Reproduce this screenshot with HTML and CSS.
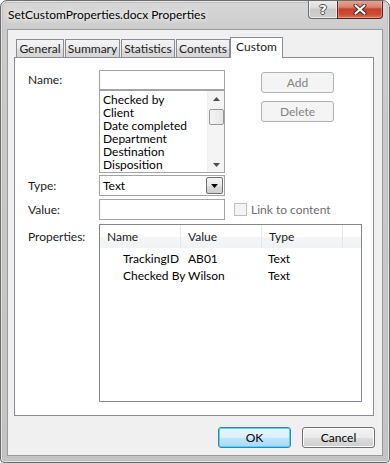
FILE: index.html
```html
<!DOCTYPE html>
<html>
<head>
<meta charset="utf-8">
<link rel="stylesheet" href="styles.css">
</head>
<body>
<div class="window">
  <div class="titlebar">
    <span class="title">SetCustomProperties.docx Properties</span>
    <div class="caption-btns">
      <div class="cbtn help"><span class="qmark">?</span></div>
      <div class="cbtn close">
        <svg width="14" height="11" viewBox="0 0 14 11">
          <path d="M2.5 1.5 L11.5 9.5 M11.5 1.5 L2.5 9.5" stroke="#3a2a28" stroke-width="4" stroke-linecap="round"/>
          <path d="M2.5 1.5 L11.5 9.5 M11.5 1.5 L2.5 9.5" stroke="#ffffff" stroke-width="2.2" stroke-linecap="round"/>
        </svg>
      </div>
    </div>
  </div>
  <div class="client">
    <div class="tabs">
      <div class="tab t-general">General</div>
      <div class="tab t-summary">Summary</div>
      <div class="tab t-stats">Statistics</div>
      <div class="tab t-contents">Contents</div>
      <div class="tab selected t-custom">Custom</div>
    </div>
    <div class="panel">
      <div class="row row-name">
        <div class="label">Name:</div>
        <div class="simple-combo">
          <div class="edit"></div>
          <div class="listbox">
            <div class="items">
              <div class="item">Checked by</div>
              <div class="item">Client</div>
              <div class="item">Date completed</div>
              <div class="item">Department</div>
              <div class="item">Destination</div>
              <div class="item">Disposition</div>
            </div>
            <div class="vscroll">
              <svg class="arrow" width="7" height="4" viewBox="0 0 7 4"><path d="M0 4 L3.5 0 L7 4 Z" fill="#4d4d4d"/></svg>
              <div class="thumb"></div>
              <div class="track"></div>
              <svg class="arrow" width="7" height="4" viewBox="0 0 7 4"><path d="M0 0 L7 0 L3.5 4 Z" fill="#4d4d4d"/></svg>
            </div>
          </div>
        </div>
        <div class="side-btns">
          <div class="btn disabled">Add</div>
          <div class="btn disabled">Delete</div>
        </div>
      </div>
      <div class="row row-type">
        <div class="label">Type:</div>
        <div class="dropdown">
          <span class="dd-text">Text</span>
          <div class="dd-btn"><svg width="7" height="4" viewBox="0 0 7 4"><path d="M0 0 L7 0 L3.5 4 Z" fill="#000"/></svg></div>
        </div>
      </div>
      <div class="row row-value">
        <div class="label">Value:</div>
        <div class="edit value-edit"></div>
        <div class="checkbox"></div>
        <span class="check-label">Link to content</span>
      </div>
      <div class="row row-props">
        <div class="label">Properties:</div>
        <div class="listview">
          <div class="lv-header">
            <div class="lv-col c-name">Name</div>
            <div class="lv-col c-value">Value</div>
            <div class="lv-col c-type">Type</div>
            <div class="lv-col c-rest"></div>
          </div>
          <div class="lv-body">
            <div class="lv-row">
              <div class="lv-cell c-name">TrackingID</div>
              <div class="lv-cell c-value">AB01</div>
              <div class="lv-cell c-type">Text</div>
            </div>
            <div class="lv-row">
              <div class="lv-cell c-name">Checked By</div>
              <div class="lv-cell c-value">Wilson</div>
              <div class="lv-cell c-type">Text</div>
            </div>
          </div>
        </div>
      </div>
    </div>
    <div class="buttons">
      <div class="btn default">OK</div>
      <div class="btn">Cancel</div>
    </div>
  </div>
</div>
</body>
</html>
```

FILE: styles.css
```css
html, body {
  margin: 0;
  padding: 0;
  background: #ffffff;
}

body {
  font-family: Lato, "Noto Sans", "Liberation Sans", sans-serif;
  font-size: 12px;
  color: #1b1b1b;
}

.window {
  width: 390px;
  height: 463px;
  box-sizing: border-box;
  border: 1px solid #6c6c6c;
  border-radius: 7px 7px 4px 4px;
  background: linear-gradient(to bottom, #d8d8d8 0px, #cbcbcb 30px, #c4c4c4 100%);
  box-shadow: inset 0 0 0 1px #e4e4e4, inset 0 0 0 2px #c0c0c0;
  padding: 0 6px 6px 6px;
  display: flex;
  flex-direction: column;
  overflow: hidden;
}

.titlebar {
  height: 28px;
  display: flex;
  align-items: flex-start;
  flex: none;
}

.title {
  padding: 5px 0 0 1px;
  line-height: 18px;
  font-size: 12px;
  color: #000;
  text-shadow: 0 0 8px #ffffff, 0 0 4px #ffffff;
}

.caption-btns {
  margin-left: auto;
  margin-top: -1px;
  display: flex;
}

.cbtn {
  height: 19px;
  box-sizing: border-box;
  border: 1px solid #6e6e6e;
  border-top: none;
  display: flex;
  align-items: center;
  justify-content: center;
}

.help {
  width: 29px;
  border-right: none;
  border-radius: 0 0 0 4px;
  background: linear-gradient(to bottom, #eeeeee 0%, #dcdcdc 45%, #c8c8c8 50%, #cfcfcf 100%);
  box-shadow: inset 0 0 0 1px rgba(255,255,255,0.6);
}

.qmark {
  font-family: "DejaVu Sans", sans-serif;
  font-weight: bold;
  font-size: 13px;
  line-height: 13px;
  color: #ffffff;
  text-shadow: 1px 0 0 #4a4a4a, -1px 0 0 #4a4a4a, 0 1px 0 #4a4a4a, 0 -1px 0 #4a4a4a;
}

.close {
  width: 46px;
  border-color: #5a2219;
  border-radius: 0 0 4px 0;
  background: linear-gradient(to bottom, #e8a898 0%, #d9806c 40%, #c7412a 50%, #cd4b32 80%, #dc7560 100%);
  box-shadow: inset 0 0 0 1px rgba(255,220,210,0.35);
}

.client {
  flex: 1;
  border: 1px solid #9a9a9a;
  background: #f0f0f0;
  padding: 7px 8px 0 6px;
  display: flex;
  flex-direction: column;
}

.tabs {
  display: flex;
  align-items: flex-start;
  height: 21px;
  margin-bottom: -1px;
  padding-left: 2px;
  position: relative;
  z-index: 1;
}

.tab {
  height: 18px;
  margin-top: 2px;
  box-sizing: border-box;
  border: 1px solid #898c95;
  border-bottom: none;
  background: linear-gradient(to bottom, #f3f3f3 0%, #ebebeb 50%, #dddddd 51%, #d6d6d6 100%);
  display: flex;
  align-items: center;
  justify-content: center;
  line-height: 16px;
  color: #1b1b1b;
  margin-right: 1px;
}

.t-general { width: 48px; }
.t-summary { width: 55px; }
.t-stats { width: 54px; }
.t-contents { width: 54px; margin-right: 0; }

.tab.selected {
  width: 53px;
  height: 21px;
  margin-top: 0;
  background: #ffffff;
  padding-bottom: 3px;
}

.panel {
  height: 359px;
  box-sizing: border-box;
  border: 1px solid #898c95;
  background: #ffffff;
  padding: 12px 0 0 13px;
  display: flex;
  flex-direction: column;
}

.row {
  display: flex;
  align-items: flex-start;
}

.label {
  width: 71px;
  flex: none;
  line-height: 20px;
  color: #1b1b1b;
}

.edit {
  width: 126px;
  height: 20px;
  box-sizing: border-box;
  border: 1px solid #a3a3a3;
  background: #ffffff;
}

.simple-combo {
  display: flex;
  flex-direction: column;
}

.listbox {
  width: 126px;
  height: 83px;
  box-sizing: border-box;
  border: 1px solid #a3a3a3;
  border-top: none;
  display: flex;
  margin-top: 1px;
  border-top: 1px solid #a3a3a3;
  margin-top: 0;
}

.items {
  flex: 1;
  padding: 2px 0 0 3px;
  overflow: hidden;
}

.item {
  line-height: 13px;
  height: 13px;
  white-space: nowrap;
  color: #000;
}

.vscroll {
  width: 17px;
  flex: none;
  background: #f4f4f4;
  display: flex;
  flex-direction: column;
  align-items: center;
  padding: 4px 0 3px 0;
  box-sizing: border-box;
  border-left: 1px solid #f0f0f0;
}

.vscroll .arrow {
  flex: none;
  margin: 2px 0;
}

.thumb {
  width: 15px;
  height: 16px;
  box-sizing: border-box;
  border: 1px solid #979797;
  border-radius: 2px;
  background: linear-gradient(to right, #f4f4f4, #e6e6e6);
  margin-top: 6px;
  flex: none;
}

.track {
  flex: 1;
}

.side-btns {
  margin-left: 36px;
  margin-top: 2px;
  display: flex;
  flex-direction: column;
  gap: 8px;
}

.btn {
  width: 73px;
  height: 21px;
  box-sizing: border-box;
  border: 1px solid #707070;
  border-radius: 3px;
  background: linear-gradient(to bottom, #f2f2f2 0%, #ebebeb 50%, #dddddd 51%, #cfcfcf 100%);
  box-shadow: inset 0 0 0 1px #fcfcfc;
  display: flex;
  align-items: center;
  justify-content: center;
  color: #000;
  line-height: 16px;
}

.btn.disabled {
  background: #f4f4f4;
  border-color: #adb2b5;
  box-shadow: none;
  color: #838383;
}

.row-type {
  margin-top: 2px;
}

.row-type .label {
  line-height: 21px;
}

.dropdown {
  width: 126px;
  height: 21px;
  box-sizing: border-box;
  border: 1px solid #a3a3a3;
  background: #ffffff;
  display: flex;
  align-items: center;
  padding: 0 1px 0 3px;
}

.dd-text {
  flex: 1;
  color: #000;
}

.dd-btn {
  width: 17px;
  height: 17px;
  box-sizing: border-box;
  border: 1px solid #707070;
  border-radius: 2px;
  background: linear-gradient(to bottom, #f2f2f2 0%, #ebebeb 50%, #dddddd 51%, #cfcfcf 100%);
  display: flex;
  align-items: center;
  justify-content: center;
}

.row-value {
  margin-top: 3px;
  align-items: center;
}

.row-value .label {
  line-height: 21px;
}

.value-edit {
  height: 21px;
}

.checkbox {
  width: 13px;
  height: 13px;
  box-sizing: border-box;
  border: 1px solid #bcbcbc;
  background: #f4f4f4;
  margin-left: 9px;
}

.check-label {
  margin-left: 4px;
  color: #6d6d6d;
}

.row-props {
  margin-top: 4px;
}

.row-props .label {
  padding-top: 3px;
}

.listview {
  width: 263px;
  height: 178px;
  box-sizing: border-box;
  border: 1px solid #828790;
  background: #ffffff;
}

.lv-header {
  display: flex;
  height: 23px;
  background: linear-gradient(to bottom, #ffffff 0%, #ffffff 50%, #f4f5f7 51%, #f1f2f4 100%);
}

.lv-col {
  box-sizing: border-box;
  border-right: 1px solid #e3e6ea;
  display: flex;
  align-items: center;
  padding-left: 7px;
  color: #1b1b1b;
}

.c-name { width: 81px; }
.c-value { width: 81px; }
.c-type { width: 81px; }
.c-rest { flex: 1; border-right: none; }

.lv-body {
  padding-top: 2px;
}

.lv-row {
  display: flex;
  height: 17px;
  align-items: center;
}

.lv-cell {
  box-sizing: border-box;
  padding-left: 7px;
  white-space: nowrap;
  color: #000;
}

.lv-cell.c-name {
  padding-left: 23px;
}

.lv-cell.c-type {
  padding-left: 6px;
}

.buttons {
  display: flex;
  justify-content: flex-end;
  gap: 11px;
  margin-top: 11px;
  margin-right: -1px;
}

.btn.default {
  border-color: #3c7fb1;
  background: linear-gradient(to bottom, #eaf6fd 0%, #d9f0fc 50%, #bee6fd 51%, #a7d9f5 100%);
  box-shadow: inset 0 0 0 1px #48d8fb;
}
```
